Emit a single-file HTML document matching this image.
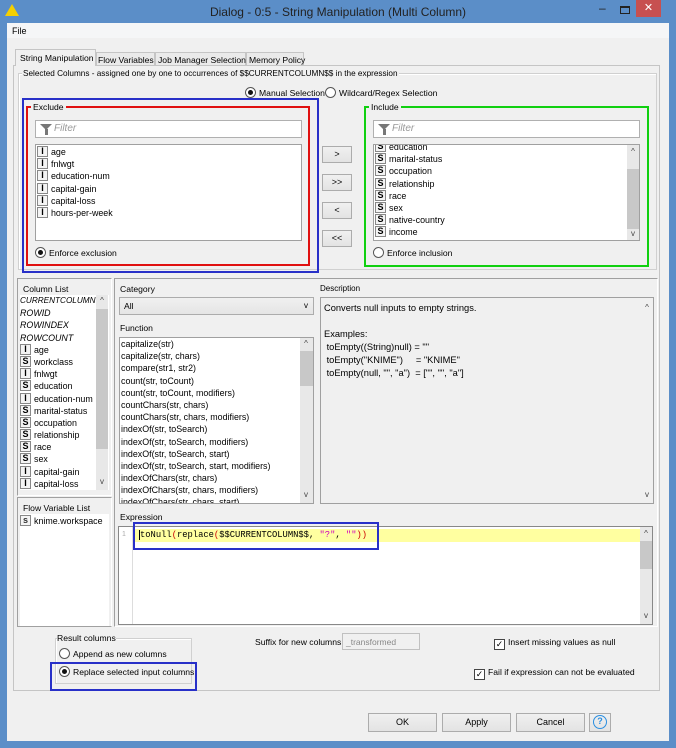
<!DOCTYPE html>
<html><head><meta charset="utf-8"><style>
*{box-sizing:border-box;margin:0;padding:0}
body{width:676px;height:748px;background:#5b8ec8;font-family:"Liberation Sans",sans-serif;font-size:8.6px;color:#000;position:relative;overflow:hidden}
.a{position:absolute}
.t{position:absolute;white-space:nowrap;line-height:12px}
.box{position:absolute;background:#fff;border:1px solid #a0a0a0}
.grp{position:absolute;border:1px solid #d0d0d0;box-shadow:inset 1px 1px 0 #fff}
.ic{display:inline-block;width:11px;height:11px;border:1px solid #888;font-size:9px;line-height:9px;text-align:center;font-weight:bold;margin-right:3px;vertical-align:top;background:#f4f4f4}
.row{height:12.2px;line-height:12px;white-space:nowrap;font-size:8.9px}
.btn{position:absolute;border:1px solid #acacac;background:linear-gradient(#f0f0f0,#e3e3e3);text-align:center;font-size:9px}
.rad{display:inline-block;width:11px;height:11px;border:1px solid #555;border-radius:50%;vertical-align:-2px;margin-right:3px;background:#fff;position:relative}
.rad.on:after{content:"";position:absolute;left:2px;top:2px;width:5px;height:5px;border-radius:50%;background:#111}
.chk{display:inline-block;width:11px;height:11px;border:1px solid #444;vertical-align:-2px;margin-right:3px;background:#fff;font-size:9px;line-height:9px;text-align:center}
.sb{position:absolute;background:#e8e8e8}
.th{position:absolute;background:#c8c8c8}
.ar{position:absolute;font-size:8px;color:#444;width:10px;text-align:center}
.fil{position:absolute;background:#fff;border:1px solid #b0b0b0;color:#999;font-style:italic;font-size:10px;line-height:16px;padding-left:18px}
.fil:before{content:"";position:absolute;left:4px;top:3px;border-left:6px solid transparent;border-right:6px solid transparent;border-top:6px solid #777}
.fil:after{content:"";position:absolute;left:9px;top:8px;width:3px;height:6px;background:#777}
</style></head><body>
<div class="a" style="left:5px;top:4px;width:0;height:0;border-left:7px solid transparent;border-right:7px solid transparent;border-bottom:12px solid #f5d000"></div>
<div class="t" style="left:0;width:676px;text-align:center;top:4px;font-size:12px;line-height:16px;color:#222">Dialog - 0:5 - String Manipulation (Multi Column)</div>
<div class="t" style="left:599px;top:2px;color:#222;font-size:12px">–</div>
<div class="a" style="left:620px;top:6px;width:10px;height:8px;border:1px solid #222;border-top-width:2px"></div>
<div class="a" style="left:636px;top:0;width:25px;height:17px;background:#c75050;color:#fff;text-align:center;font-size:11px;line-height:16px">✕</div>
<div class="a" style="left:7px;top:23px;width:662px;height:718px;background:#f0f0f0"></div>
<div class="a" style="left:7px;top:23px;width:662px;height:15px;background:#f5f6f7"></div>
<div class="t" style="left:12px;top:25px;font-size:9px">File</div>
<div class="a" style="left:13px;top:65px;width:647px;height:626px;border:1px solid #c5c5c5;background:#f0f0f0"></div>
<div class="a" style="left:15px;top:49px;width:81px;height:17px;border:1px solid #c5c5c5;border-bottom:none;background:#f0f0f0"></div>
<div class="t" style="left:20px;top:52px">String Manipulation</div>
<div class="a" style="left:96px;top:52px;width:59px;height:13px;border:1px solid #c5c5c5;border-bottom:none;background:#eaeaea"></div><div class="t" style="left:98px;top:54px">Flow Variables</div>
<div class="a" style="left:155px;top:52px;width:91px;height:13px;border:1px solid #c5c5c5;border-bottom:none;background:#eaeaea"></div><div class="t" style="left:158px;top:54px">Job Manager Selection</div>
<div class="a" style="left:246px;top:52px;width:58px;height:13px;border:1px solid #c5c5c5;border-bottom:none;background:#eaeaea"></div><div class="t" style="left:249px;top:54px">Memory Policy</div>
<div class="grp" style="left:18px;top:73px;width:639px;height:197px"></div>
<div class="t" style="left:22px;top:68px;background:#f0f0f0;padding:0 1px;font-size:8.2px">Selected Columns - assigned one by one to occurrences of $$CURRENTCOLUMN$$ in the expression</div>
<div class="t" style="left:245px;top:87px"><span class="rad on"></span>Manual Selection</div>
<div class="t" style="left:325px;top:87px"><span class="rad"></span>Wildcard/Regex Selection</div>
<div class="a" style="left:22px;top:98px;width:297px;height:175px;border:2px solid #2830c8"></div>
<div class="a" style="left:26px;top:106px;width:284px;height:160px;border:2px solid #e01010"></div>
<div class="t" style="left:31px;top:101px;background:#f0f0f0;padding:0 2px">Exclude</div>
<div class="fil" style="left:35px;top:120px;width:267px;height:18px">Filter</div>
<div class="box" style="left:35px;top:144px;width:267px;height:97px;padding:1px">
<div class="row"><span class="ic">I</span>age</div><div class="row"><span class="ic">I</span>fnlwgt</div><div class="row"><span class="ic">I</span>education-num</div><div class="row"><span class="ic">I</span>capital-gain</div><div class="row"><span class="ic">I</span>capital-loss</div><div class="row"><span class="ic">I</span>hours-per-week</div></div>
<div class="t" style="left:35px;top:247px"><span class="rad on"></span>Enforce exclusion</div>
<div class="btn" style="left:322px;top:146px;width:30px;height:17px;line-height:15px">&gt;</div>
<div class="btn" style="left:322px;top:174px;width:30px;height:17px;line-height:15px">&gt;&gt;</div>
<div class="btn" style="left:322px;top:202px;width:30px;height:17px;line-height:15px">&lt;</div>
<div class="btn" style="left:322px;top:230px;width:30px;height:17px;line-height:15px">&lt;&lt;</div>
<div class="a" style="left:364px;top:106px;width:285px;height:161px;border:2px solid #10d010"></div>
<div class="t" style="left:369px;top:101px;background:#f0f0f0;padding:0 2px">Include</div>
<div class="fil" style="left:373px;top:120px;width:267px;height:18px">Filter</div>
<div class="box" style="left:373px;top:144px;width:267px;height:97px;padding:0 1px;overflow:hidden">
<div style="margin-top:-4px"><div class="row"><span class="ic">S</span>education</div><div class="row"><span class="ic">S</span>marital-status</div><div class="row"><span class="ic">S</span>occupation</div><div class="row"><span class="ic">S</span>relationship</div><div class="row"><span class="ic">S</span>race</div><div class="row"><span class="ic">S</span>sex</div><div class="row"><span class="ic">S</span>native-country</div><div class="row"><span class="ic">S</span>income</div></div>
<div class="sb" style="left:253px;top:0;width:12px;height:95px"></div><div class="th" style="left:253px;top:24px;width:12px;height:60px"></div>
<div class="ar" style="left:254px;top:2px">^</div><div class="ar" style="left:254px;top:84px">v</div></div>
<div class="t" style="left:373px;top:247px"><span class="rad"></span>Enforce inclusion</div>
<div class="a" style="left:17px;top:278px;width:95px;height:218px;border:1px solid #a0a0a0;border-right-color:#fff;border-bottom-color:#fff"></div>
<div class="t" style="left:23px;top:283px">Column List</div>
<div class="box" style="left:20px;top:295px;width:89px;height:195px;border:none;overflow:hidden">
<div style="font-style:italic"><div class="row" style="font-size:8.2px">CURRENTCOLUMN</div><div class="row">ROWID</div><div class="row">ROWINDEX</div><div class="row">ROWCOUNT</div></div>
<div class="row"><span class="ic">I</span>age</div><div class="row"><span class="ic">S</span>workclass</div><div class="row"><span class="ic">I</span>fnlwgt</div><div class="row"><span class="ic">S</span>education</div><div class="row"><span class="ic">I</span>education-num</div><div class="row"><span class="ic">S</span>marital-status</div><div class="row"><span class="ic">S</span>occupation</div><div class="row"><span class="ic">S</span>relationship</div><div class="row"><span class="ic">S</span>race</div><div class="row"><span class="ic">S</span>sex</div><div class="row"><span class="ic">I</span>capital-gain</div><div class="row"><span class="ic">I</span>capital-loss</div>
<div class="sb" style="left:76px;top:0;width:12px;height:195px"></div><div class="th" style="left:76px;top:14px;width:12px;height:140px"></div>
<div class="ar" style="left:77px;top:1px">^</div><div class="ar" style="left:77px;top:182px">v</div></div>
<div class="a" style="left:17px;top:497px;width:95px;height:130px;border:1px solid #a0a0a0;border-right-color:#fff"></div>
<div class="t" style="left:23px;top:502px">Flow Variable List</div>
<div class="box" style="left:20px;top:514px;width:89px;height:112px;border:none"><div class="row" style="margin-top:1px"><span class="ic" style="color:#333">s</span>knime.workspace</div></div>
<div class="a" style="left:114px;top:278px;width:544px;height:349px;border:1px solid #a0a0a0;border-right-color:#fff;border-bottom-color:#fff"></div>
<div class="t" style="left:120px;top:283px">Category</div>
<div class="a" style="left:119px;top:297px;width:195px;height:18px;border:1px solid #acacac;background:linear-gradient(#f0f0f0,#e5e5e5);padding:2px 4px;line-height:12px">All<span style="position:absolute;right:5px;top:2px;font-size:8px">v</span></div>
<div class="t" style="left:120px;top:322px">Function</div>
<div class="box" style="left:119px;top:337px;width:195px;height:167px;overflow:hidden;padding-left:1px">
<div class="row">capitalize(str)</div><div class="row">capitalize(str, chars)</div><div class="row">compare(str1, str2)</div><div class="row">count(str, toCount)</div><div class="row">count(str, toCount, modifiers)</div><div class="row">countChars(str, chars)</div><div class="row">countChars(str, chars, modifiers)</div><div class="row">indexOf(str, toSearch)</div><div class="row">indexOf(str, toSearch, modifiers)</div><div class="row">indexOf(str, toSearch, start)</div><div class="row">indexOf(str, toSearch, start, modifiers)</div><div class="row">indexOfChars(str, chars)</div><div class="row">indexOfChars(str, chars, modifiers)</div><div class="row">indexOfChars(str, chars, start)</div>
<div class="sb" style="left:180px;top:0;width:13px;height:165px"></div><div class="th" style="left:180px;top:13px;width:13px;height:35px"></div>
<div class="ar" style="left:181px;top:1px">^</div><div class="ar" style="left:181px;top:152px">v</div></div>
<div class="t" style="left:320px;top:283px;font-size:8px">Description</div>
<div class="a" style="left:320px;top:297px;width:334px;height:207px;border:1px solid #a0a0a0;background:#f0f0f0;padding:4px 3px;line-height:13px;font-size:9.3px">Converts null inputs to empty strings.<br><br>Examples:<br>&nbsp;toEmpty((String)null) = ""<br>&nbsp;toEmpty("KNIME")&nbsp;&nbsp;&nbsp;&nbsp;&nbsp;= "KNIME"<br>&nbsp;toEmpty(null, "", "a")&nbsp;&nbsp;= ["", "", "a"]
<div class="ar" style="left:321px;top:3px">^</div><div class="ar" style="left:321px;top:190px">v</div></div>
<div class="t" style="left:120px;top:511px">Expression</div>
<div class="box" style="left:118px;top:526px;width:535px;height:99px;border-color:#888;overflow:hidden">
<div class="a" style="left:13px;top:0;width:1px;height:99px;background:#ddd"></div>
<div class="a" style="left:14px;top:2px;width:507px;height:13px;background:#ffffa0"></div>
<div class="t" style="left:3px;top:2px;font-size:7px;color:#aaa">1</div>
<div class="t" style="left:20px;top:2px;font-family:'Liberation Mono',monospace;font-size:8.8px;line-height:13px"><span style="border-left:1px solid #000">toNull</span><span style="color:#c00">(</span>replace<span style="color:#c00">(</span>$$CURRENTCOLUMN$$, <span style="color:#d000c0">"?"</span>, <span style="color:#d000c0">""</span><span style="color:#c00">))</span></div>
<div class="sb" style="left:521px;top:0;width:12px;height:97px"></div><div class="th" style="left:521px;top:14px;width:12px;height:28px"></div>
<div class="ar" style="left:522px;top:2px">^</div><div class="ar" style="left:522px;top:84px">v</div></div>
<div class="a" style="left:133px;top:522px;width:246px;height:28px;border:2px solid #2830c8"></div>
<div class="grp" style="left:55px;top:638px;width:137px;height:46px"></div>
<div class="t" style="left:57px;top:632px;background:#f0f0f0">Result columns</div>
<div class="t" style="left:59px;top:648px"><span class="rad"></span>Append as new columns</div>
<div class="t" style="left:59px;top:666px"><span class="rad on"></span>Replace selected input columns</div>
<div class="a" style="left:50px;top:662px;width:147px;height:29px;border:2px solid #2830c8"></div>
<div class="t" style="left:255px;top:636px">Suffix for new columns</div>
<div class="a" style="left:342px;top:633px;width:78px;height:17px;border:1px solid #c0c0c0;background:#f0f0f0;color:#888;padding:2px 3px;font-size:8.5px;line-height:12px">_transformed</div>
<div class="t" style="left:494px;top:636px"><span class="chk">✓</span>Insert missing values as null</div>
<div class="t" style="left:474px;top:666px"><span class="chk">✓</span>Fail if expression can not be evaluated</div>
<div class="btn" style="left:368px;top:713px;width:69px;height:19px;line-height:17px">OK</div>
<div class="btn" style="left:442px;top:713px;width:69px;height:19px;line-height:17px">Apply</div>
<div class="btn" style="left:516px;top:713px;width:69px;height:19px;line-height:17px">Cancel</div>
<div class="btn" style="left:589px;top:713px;width:22px;height:19px"><div style="width:14px;height:14px;border:1.5px solid #2a8ee0;border-radius:50%;margin:1px auto;color:#2a8ee0;font-size:9px;line-height:11px;font-weight:bold">?</div></div>
</body></html>
